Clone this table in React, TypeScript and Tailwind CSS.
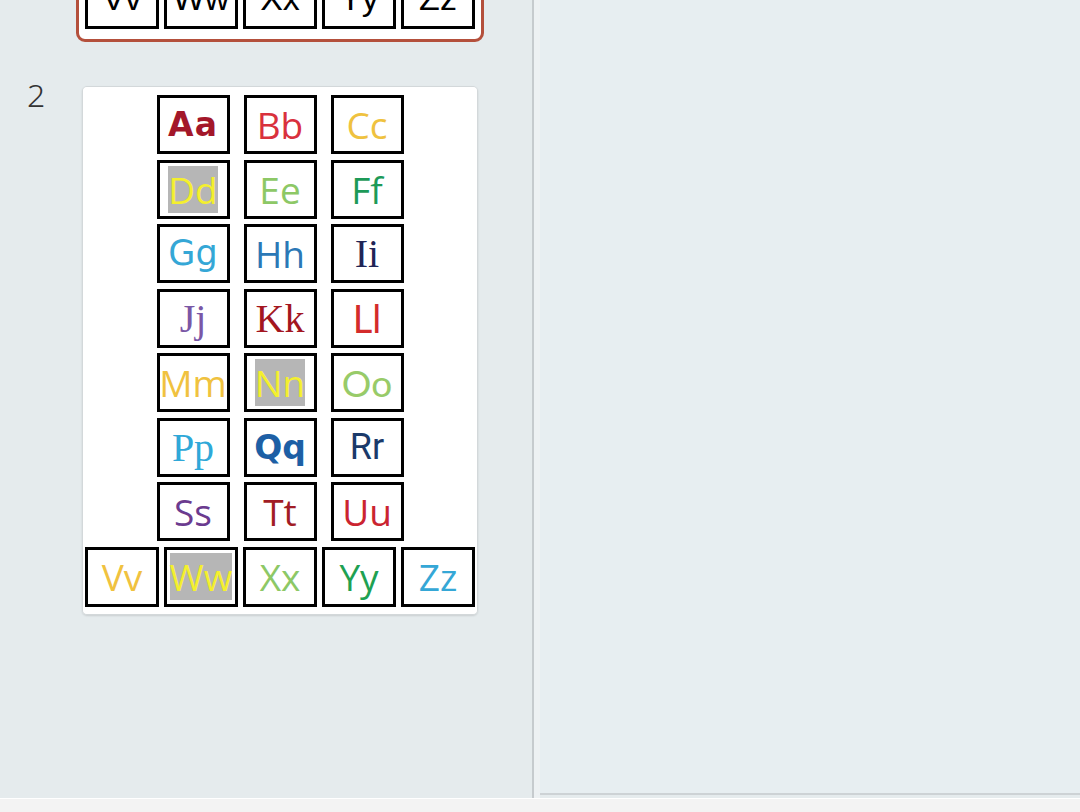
type Cell = {
  t: string;
  c: string;
  f?: string;
  hl?: boolean;
};

const calibri = "font-['Open_Sans','Noto_Sans',sans-serif] text-[37px]";
const gothic = "font-['DejaVu_Sans',sans-serif]";
const serif = "font-['Liberation_Serif','DejaVu_Serif',serif] text-[40px]";

const rows: Cell[][] = [
  [
    { t: 'Aa', c: 'text-[#a3172a]', f: `${gothic} text-[33px] font-bold tracking-[1px]` },
    { t: 'Bb', c: 'text-[#d9313d]', f: calibri },
    { t: 'Cc', c: 'text-[#efc23f]', f: calibri },
  ],
  [
    { t: 'Dd', c: 'text-[#f4ef2e]', f: calibri, hl: true },
    { t: 'Ee', c: 'text-[#8dc866]', f: calibri },
    { t: 'Ff', c: 'text-[#1d9a58]', f: `${calibri} font-medium` },
  ],
  [
    { t: 'Gg', c: 'text-[#35a7d6]', f: `${gothic} text-[35px]` },
    { t: 'Hh', c: 'text-[#2b78b6]', f: calibri },
    { t: 'Ii', c: 'text-[#1f2456]', f: serif },
  ],
  [
    { t: 'Jj', c: 'text-[#7a57a6]', f: serif },
    { t: 'Kk', c: 'text-[#a3161f]', f: serif },
    { t: 'Ll', c: 'text-[#d42b2b]', f: "font-['Lato',sans-serif] text-[38px]" },
  ],
  [
    { t: 'Mm', c: 'text-[#f0c23f]', f: calibri },
    { t: 'Nn', c: 'text-[#f4ef2e]', f: `${calibri} font-medium`, hl: true },
    { t: 'Oo', c: 'text-[#98cb69]', f: "font-['Lato',sans-serif] text-[37px]" },
  ],
  [
    { t: 'Pp', c: 'text-[#2fa8d8]', f: serif },
    { t: 'Qq', c: 'text-[#1d5fa5]', f: `${gothic} text-[33px] font-bold` },
    { t: 'Rr', c: 'text-[#1b3a6a]', f: "font-['Roboto',sans-serif] text-[36px]" },
  ],
  [
    { t: 'Ss', c: 'text-[#6b3b8f]', f: calibri },
    { t: 'Tt', c: 'text-[#a11c25]', f: calibri },
    { t: 'Uu', c: 'text-[#cb2430]', f: calibri },
  ],
];

const lastRow: Cell[] = [
  { t: 'Vv', c: 'text-[#f0c23f]', f: calibri },
  { t: 'Ww', c: 'text-[#f4ef2e]', f: calibri, hl: true },
  { t: 'Xx', c: 'text-[#8dc866]', f: calibri },
  { t: 'Yy', c: 'text-[#1ea152]', f: calibri },
  { t: 'Zz', c: 'text-[#35a7d6]', f: calibri },
];

function LetterBox({ cell, plain, wide }: { cell: Cell; plain?: boolean; wide?: boolean }) {
  const look = plain ? "text-black font-['Liberation_Sans',sans-serif] text-[34px]" : `${cell.c} ${cell.f}`;
  return (
    <div
      className={`flex items-center justify-center overflow-hidden border-[3px] border-black bg-white ${
        wide ? 'h-[60px] w-[74px]' : 'h-[59px] w-[73px]'
      }`}
    >
      <span className={`whitespace-nowrap leading-[47px] ${look} ${cell.hl && !plain ? 'bg-[#b6b6b6]' : ''}`}>
        {cell.t}
      </span>
    </div>
  );
}

function SlideCard({ plain }: { plain?: boolean }) {
  return (
    <div className="flex h-[527px] flex-col items-center gap-[5.5px] bg-white pt-[8px]">
      {rows.map((row, i) => (
        <div key={i} className="flex gap-[14px]">
          {row.map((cell) => (
            <LetterBox key={cell.t} cell={cell} plain={plain} />
          ))}
        </div>
      ))}
      <div className="flex gap-[5px]">
        {lastRow.map((cell) => (
          <LetterBox key={cell.t} cell={cell} plain={plain} wide />
        ))}
      </div>
    </div>
  );
}

function SlideRow({ num, selected, plain }: { num: number; selected?: boolean; plain?: boolean }) {
  return (
    <div className="flex items-start">
      <div className="w-[76px] pl-[27px] font-['Noto_Sans',sans-serif] text-[32px] font-light leading-[30px] text-[#333]">
        {num}
      </div>
      <div
        className={`w-[408px] rounded-[9px] border-[3px] p-[3px] ${
          selected ? 'border-[#b4503c] bg-white' : 'border-transparent'
        }`}
      >
        <div
          className={`overflow-hidden rounded-[5px] ${
            selected ? '' : 'border border-[#d3d8da] shadow-[0_1px_2px_rgba(0,0,0,0.12)]'
          }`}
        >
          <SlideCard plain={plain} />
        </div>
      </div>
    </div>
  );
}

export default function App() {
  return (
    <div className="flex h-[812px] w-[1080px] flex-col overflow-hidden bg-[#e5ebed]">
      <div className="flex min-h-0 flex-1">
        {/* Thumbnail pane, scrolled down to slide 2 */}
        <div className="w-[532px] overflow-hidden bg-[#e5ebed]">
          <div className="-mt-[497px] flex flex-col gap-[38px]">
            <SlideRow num={1} selected plain />
            <SlideRow num={2} />
          </div>
        </div>

        {/* Splitter */}
        <div className="w-[2px] bg-[#c6cbce]" />
        <div className="w-[6px] bg-[#edf1f3]" />

        {/* Editing area */}
        <div className="flex flex-1 flex-col">
          <div className="flex-1 bg-[#e7eef1]" />
          <div className="h-[2px] bg-[#cdd2d5]" />
          <div className="h-[3px] bg-[#e5ebed]" />
        </div>
      </div>

      {/* Status bar */}
      <div className="h-[14px] border-t border-white bg-[#f3f3f3]" />
    </div>
  );
}
